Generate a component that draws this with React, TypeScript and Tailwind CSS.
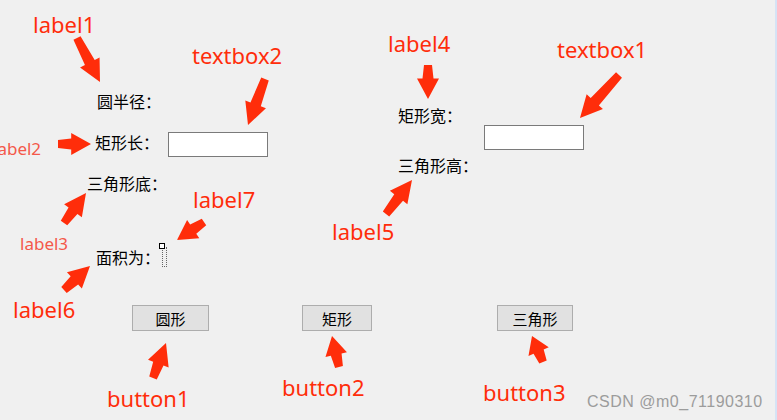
const RED = '#ff2d0a'

// arrows: [tailX, tailY, tipX, tipY]
const arrows: [number, number, number, number][] = [
  [77, 38, 100, 82], // label1
  [265, 79, 248, 125], // textbox2
  [58, 144, 91, 144], // label2
  [64, 223, 86, 193], // label3
  [204, 222, 177, 240], // label7
  [64, 290, 90, 266], // label6
  [153, 378, 166, 343], // button1
  [339, 367, 332, 336], // button2
  [543, 362, 532, 336], // button3
  [428, 65, 428, 99], // label4
  [619, 75, 580, 118], // textbox1
  [386, 214, 412, 180], // label5
]

function arrowPoints([x1, y1, x2, y2]: [number, number, number, number]) {
  const dx = x2 - x1
  const dy = y2 - y1
  const len = Math.hypot(dx, dy)
  const ux = dx / len
  const uy = dy / len
  const nx = -uy
  const ny = ux
  const head = Math.min(22, len * 0.6)
  const hw = 11
  const swTail = 4
  const swBase = 5.5
  const bx = x2 - ux * head
  const by = y2 - uy * head
  const pts = [
    [x1 + nx * swTail, y1 + ny * swTail],
    [bx + nx * swBase, by + ny * swBase],
    [bx + nx * hw, by + ny * hw],
    [x2, y2],
    [bx - nx * hw, by - ny * hw],
    [bx - nx * swBase, by - ny * swBase],
    [x1 - nx * swTail, y1 - ny * swTail],
  ]
  return pts.map((p) => p.join(',')).join(' ')
}

const Arrows = () => (
  <svg className="absolute left-0 top-0 pointer-events-none" width={777} height={420}>
    {arrows.map((a, i) => (
      <polygon key={i} points={arrowPoints(a)} fill={RED} />
    ))}
  </svg>
)

export default function App() {
  // form designer canvas: controls and annotations sit at their own coordinates
  const cjk = "text-[16px] leading-none text-black whitespace-nowrap [font-family:'Noto_Sans_CJK_SC',sans-serif]"
  const note = "text-[22px] leading-none text-[#ff2d0a] whitespace-nowrap [font-family:'Noto_Sans',sans-serif]"
  const noteSm = "text-[17px] leading-none text-[#f4584a] whitespace-nowrap [font-family:'Noto_Sans',sans-serif]"
  const btn =
    "flex items-center justify-center bg-[#e1e1e1] border border-[#adadad] text-[15px] leading-none text-black [font-family:'Noto_Sans_CJK_SC',sans-serif]"

  return (
    <div className="relative w-[777px] h-[420px] bg-[#f0f0f0] overflow-hidden">
      {/* form controls */}
      <span className={`absolute left-[97px] top-[93px] ${cjk}`}>圆半径：</span>
      <span className={`absolute left-[95px] top-[134px] ${cjk}`}>矩形长：</span>
      <span className={`absolute left-[87px] top-[175px] ${cjk}`}>三角形底：</span>
      <span className={`absolute left-[96px] top-[249px] ${cjk}`}>面积为：</span>
      <span className={`absolute left-[398px] top-[107px] ${cjk}`}>矩形宽：</span>
      <span className={`absolute left-[398px] top-[157px] ${cjk}`}>三角形高：</span>

      <div className="absolute left-[168px] top-[132px] w-[100px] h-[25px] bg-white border border-[#7a7a7a]" />
      <div className="absolute left-[484px] top-[125px] w-[100px] h-[25px] bg-white border border-[#7a7a7a]" />

      {/* label7 (empty, selected) */}
      <div className="absolute left-[162px] top-[247px] w-[5px] h-[20px] border border-dotted border-[#666]" />
      <div className="absolute left-[159px] top-[243px] w-[6px] h-[6px] bg-white border border-black" />

      <div className={`absolute left-[132px] top-[305px] w-[77px] h-[26px] ${btn}`}>圆形</div>
      <div className={`absolute left-[302px] top-[305px] w-[70px] h-[26px] ${btn}`}>矩形</div>
      <div className={`absolute left-[497px] top-[305px] w-[76px] h-[26px] ${btn}`}>三角形</div>

      {/* annotations */}
      <span className={`absolute left-[33px] top-[13px] ${note}`}>label1</span>
      <span className={`absolute left-[192px] top-[44px] ${note}`}>textbox2</span>
      <span className={`absolute left-[-7px] top-[140px] ${noteSm}`}>label2</span>
      <span className={`absolute left-[20px] top-[235px] ${noteSm}`}>label3</span>
      <span className={`absolute left-[193px] top-[188px] ${note}`}>label7</span>
      <span className={`absolute left-[13px] top-[298px] ${note}`}>label6</span>
      <span className={`absolute left-[107px] top-[387px] ${note}`}>button1</span>
      <span className={`absolute left-[282px] top-[376px] ${note}`}>button2</span>
      <span className={`absolute left-[483px] top-[381px] ${note}`}>button3</span>
      <span className={`absolute left-[388px] top-[32px] ${note}`}>label4</span>
      <span className={`absolute left-[557px] top-[38px] ${note}`}>textbox1</span>
      <span className={`absolute left-[332px] top-[220px] ${note}`}>label5</span>

      <Arrows />

      <span className="absolute left-[587px] top-[394px] text-[16px] leading-none tracking-[0.5px] text-[#9c9c9c] whitespace-nowrap [font-family:'Liberation_Sans',sans-serif]">
        CSDN @m0_71190310
      </span>

      <div className="absolute right-0 top-0 w-[2px] h-full bg-[#d6e3f5]" />
    </div>
  )
}
